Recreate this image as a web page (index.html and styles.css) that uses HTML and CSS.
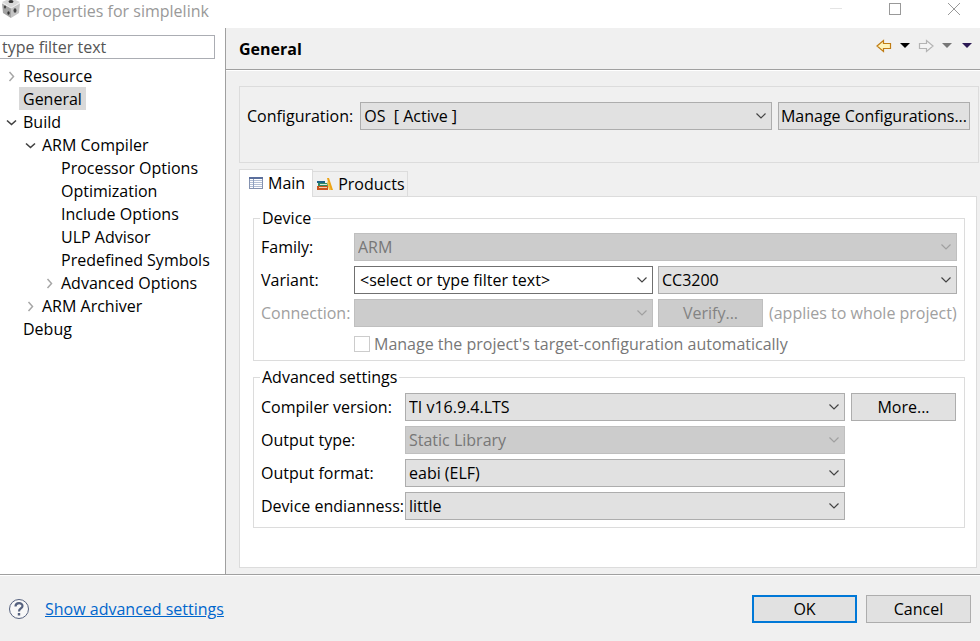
FILE: index.html
```html
<!DOCTYPE html>
<html lang="en">
<head>
  <meta charset="UTF-8" />
  <title>Properties for simplelink</title>
  <link rel="stylesheet" href="styles.css">
</head>
<body>
  <header class="titlebar">
    <svg class="app-icon" width="20" height="20" viewBox="0 0 20 20">
      <path d="M10 -2 L19 2 L10 8 L1 2 Z" fill="#d8d8d8"/>
      <path d="M1 3 L10 8 L10 18 L2 13 Z" fill="#a4a4a4"/>
      <path d="M19 3 L10 8 L10 18 L18 13 Z" fill="#c4c4c4"/>
      <path d="M1 3 L10 8 L19 3" fill="none" stroke="#ececec"/>
      <ellipse cx="10" cy="1.500" rx="2.500" ry="1.500" fill="#333"/>
      <ellipse cx="4" cy="7" rx="1.200" ry="1.500" fill="#444"/>
      <ellipse cx="7.500" cy="13" rx="1.200" ry="1.700" fill="#333"/>
      <ellipse cx="14" cy="10.500" rx="1.500" ry="2.200" fill="#444"/>
    </svg>
    <span class="title">Properties for simplelink</span>
    <div class="window-buttons">
      <button aria-label="Minimize"><svg width="14" height="14"><path d="M1 6.500h12" stroke="#e4e4e4"/></svg></button>
      <button aria-label="Maximize"><svg width="14" height="14"><rect x="1.500" y="1.500" width="11" height="11" fill="none" stroke="#999"/></svg></button>
      <button aria-label="Close"><svg width="14" height="14"><path d="M1 1l12 12M13 1L1 13" stroke="#999"/></svg></button>
    </div>
  </header>

  <main class="dialog">
    <nav class="sidebar">
      <input type="text" class="filter" placeholder="type filter text" aria-label="type filter text" />
      <ul class="tree">
        <li><div class="node closed"><span>Resource</span></div></li>
        <li><div class="node"><span class="selected">General</span></div></li>
        <li>
          <div class="node open"><span>Build</span></div>
          <ul>
            <li>
              <div class="node open"><span>ARM Compiler</span></div>
              <ul>
                <li><div class="node"><span>Processor Options</span></div></li>
                <li><div class="node"><span>Optimization</span></div></li>
                <li><div class="node"><span>Include Options</span></div></li>
                <li><div class="node"><span>ULP Advisor</span></div></li>
                <li><div class="node"><span>Predefined Symbols</span></div></li>
                <li><div class="node closed"><span>Advanced Options</span></div></li>
              </ul>
            </li>
            <li><div class="node closed"><span>ARM Archiver</span></div></li>
          </ul>
        </li>
        <li><div class="node"><span>Debug</span></div></li>
      </ul>
    </nav>

    <section class="page">
      <div class="page-header">
        <h1>General</h1>
        <div class="history">
          <button aria-label="Back"><svg width="16" height="14"><path d="M1 7L7.500 1.500V4.500H14.500V9.500H7.500V12.500Z" fill="#fff3b8" stroke="#c07c14" stroke-width="1.200"/></svg></button>
          <button aria-label="Back history"><svg width="10" height="6"><path d="M0 0h10L5 5z" fill="#000"/></svg></button>
          <button aria-label="Forward"><svg width="16" height="14"><path d="M15 7L8.500 1.500V4.500H1.500V9.500H8.500V12.500Z" fill="#f4f4f4" stroke="#b4b4b4" stroke-width="1.200"/></svg></button>
          <button aria-label="Forward history"><svg width="10" height="6"><path d="M0 0h10L5 5z" fill="#777"/></svg></button>
          <button aria-label="Menu"><svg width="10" height="6"><path d="M0 0h10L5 5z" fill="#2c1a55"/></svg></button>
        </div>
      </div>

      <div class="content">
        <div class="config">
          <label for="configuration">Configuration:</label>
          <select id="configuration"><option>OS&nbsp; [ Active ]</option></select>
          <button class="btn">Manage Configurations...</button>
        </div>

        <div class="tabs" role="tablist">
          <button class="tab active" role="tab" aria-selected="true">
            <svg width="14" height="12">
              <rect x="0.500" y="0.500" width="13" height="11" fill="#fff" stroke="#8492b0"/>
              <path d="M0 0h14v2H0z" fill="#5b6f9c"/>
              <path d="M1 3.500h12M1 5.500h12M1 7.500h12M1 9.500h12" stroke="#b3bfd4"/>
              <path d="M4.500 2v9" stroke="#8fa0bf"/>
            </svg>
            Main
          </button>
          <button class="tab" role="tab">
            <svg width="16" height="14">
              <path d="M0 4h8v2H0z" fill="#1d6385"/>
              <path d="M1 6h10v3H1z" fill="#2f8a62"/>
              <path d="M3 7h7v1H3z" fill="#d8eadf"/>
              <path d="M0 9h11v4H0z" fill="#c9531c"/>
              <path d="M2 10h8v1H2z" fill="#f6cfa8"/>
              <path d="M10 1h2l4 12h-3z" fill="#eda315"/>
              <path d="M11 4l-1 2 2 7h2z" fill="#f7c244"/>
            </svg>
            Products
          </button>
        </div>

        <div class="panel">
          <fieldset>
            <legend>Device</legend>
            <div class="device">
              <label for="family">Family:</label>
              <select id="family" class="wide" disabled><option>ARM</option></select>

              <label for="variant">Variant:</label>
              <div class="combo">
                <input type="text" id="variant" value="&lt;select or type filter text&gt;" />
                <button aria-label="Show variants"></button>
              </div>
              <select aria-label="Device"><option>CC3200</option></select>

              <label for="connection" class="faded">Connection:</label>
              <select id="connection" disabled><option></option></select>
              <div class="verify">
                <button class="btn" disabled>Verify...</button>
                <span class="faded">(applies to whole project)</span>
              </div>

              <label class="check"><input type="checkbox" disabled />Manage the project's target-configuration automatically</label>
            </div>
          </fieldset>

          <fieldset>
            <legend>Advanced settings</legend>
            <div class="advanced">
              <label for="compiler">Compiler version:</label>
              <select id="compiler"><option>TI v16.9.4.LTS</option></select>
              <button class="btn">More...</button>

              <label for="output-type">Output type:</label>
              <select id="output-type" disabled><option>Static Library</option></select>

              <label for="output-format">Output format:</label>
              <select id="output-format"><option>eabi (ELF)</option></select>

              <label for="endianness">Device endianness:</label>
              <select id="endianness"><option>little</option></select>
            </div>
          </fieldset>
        </div>
      </div>
    </section>
  </main>

  <footer class="footer">
    <button class="help" aria-label="Help">
      <svg width="22" height="22" viewBox="0 0 22 22" fill="none" stroke="#56627f">
        <circle cx="11" cy="11" r="9.500" fill="#f8f8f8"/>
        <path d="M7.500 8.500C7.500 4 14.500 4 14.500 8C14.500 10.500 11 10.500 11 13.500" stroke-width="2.200"/>
        <path d="M11 15v2.500" stroke-width="2.400"/>
      </svg>
    </button>
    <a href="#">Show advanced settings</a>
    <button class="btn ok">OK</button>
    <button class="btn">Cancel</button>
  </footer>
</body>
</html>
```
FILE: styles.css
```css
* {
  box-sizing: border-box;
}

body {
  margin: 0;
  min-height: 100vh;
  display: flex;
  flex-direction: column;
  background: #f0f0f0;
  color: #000;
  font-family: "Open Sans", "Noto Sans", sans-serif;
  font-size: 16px;
  line-height: 20px;
}

button, input, select {
  font: inherit;
  color: inherit;
}

button {
  padding: 0;
  border: none;
  background: none;
}

svg {
  display: block;
}

/* title bar */
.titlebar {
  display: flex;
  align-items: flex-start;
  height: 28px;
  background: #fff;
  color: #999;
}

.title {
  line-height: 22px;
}

.app-icon {
  margin: 0 5px 0 1px;
}

.window-buttons {
  display: flex;
  gap: 45px;
  margin: 2px 19px 0 auto;
}

.dialog {
  flex: 1;
  display: flex;
  border-bottom: 1px solid #a0a0a0;
}

/* left tree */
.sidebar {
  width: 226px;
  padding-top: 7px;
  background: #fff;
  border-right: 1px solid #a0a0a0;
}

.filter {
  display: block;
  width: 215px;
  height: 24px;
  padding: 0 2px;
  border: 1px solid #abadb3;
  border-left: none;
}

.filter::placeholder {
  color: #555;
}

.tree, .tree ul {
  margin: 0;
  padding: 0;
  list-style: none;
}

.tree {
  padding: 5px 0 0 4px;
}

.tree ul {
  padding-left: 19px;
}

.node {
  display: flex;
  height: 23px;
  padding-left: 15px;
  line-height: 24px;
  background: 2px 7px no-repeat;
}

.node span {
  padding: 0 4px;
}

.node .selected {
  background: #d9d9d9;
}

.closed {
  background-image: url("data:image/svg+xml,%3Csvg xmlns='http://www.w3.org/2000/svg' width='11' height='11'%3E%3Cpath d='M3.500 1l4 4.500-4 4.500' fill='none' stroke='%23a6a6a6' stroke-width='1.500'/%3E%3C/svg%3E");
}

.open {
  background-image: url("data:image/svg+xml,%3Csvg xmlns='http://www.w3.org/2000/svg' width='11' height='11'%3E%3Cpath d='M1 3.500l4.500 4 4.500-4' fill='none' stroke='%23404040' stroke-width='1.600'/%3E%3C/svg%3E");
}

/* right page */
.page {
  flex: 1;
  display: flex;
  flex-direction: column;
}

.page-header {
  display: flex;
  align-items: center;
  justify-content: space-between;
  height: 42px;
  padding: 0 8px 0 13px;
  border-bottom: 1px solid #a0a0a0;
}

h1 {
  margin: 0;
  font-size: 16px;
}

.history {
  display: flex;
  align-items: center;
  gap: 8px;
  padding-bottom: 5px;
}

.history button:last-child {
  margin-left: 2px;
}

.content {
  flex: 1;
  display: flex;
  flex-direction: column;
  padding: 15px 3px 6px 13px;
  border-top: 1px solid #fff;
}

.config {
  display: flex;
  align-items: flex-start;
  gap: 6px;
  height: 77px;
  margin-right: -2px;
  padding: 15px 8px 0 7px;
  border: 1px solid #dcdcdc;
}

.config label {
  padding: 4px 1px 0 0;
}

.config select {
  flex: 1;
}

.config .btn {
  padding: 0 2px;
}

select, .combo {
  width: 100%;
  min-width: 0;
  height: 28px;
  border: 1px solid #adadad;
  border-radius: 0;
}

select {
  appearance: none;
  padding: 0 24px 0 3px;
  background: #e1e1e1 right 4px center no-repeat;
}

select, .combo button {
  background-image: url("data:image/svg+xml,%3Csvg xmlns='http://www.w3.org/2000/svg' width='12' height='8'%3E%3Cpath d='M1.500 1.500L6 6l4.500-4.500' fill='none' stroke='%23444' stroke-width='1.200'/%3E%3C/svg%3E");
}

select:disabled {
  background-color: #ccc;
  background-image: url("data:image/svg+xml,%3Csvg xmlns='http://www.w3.org/2000/svg' width='12' height='8'%3E%3Cpath d='M1.500 1.500L6 6l4.500-4.500' fill='none' stroke='%23a0a0a0' stroke-width='1.200'/%3E%3C/svg%3E");
  border-color: #bfbfbf;
  color: #777;
  opacity: 1;
}

.btn {
  min-width: 105px;
  height: 28px;
  padding: 0 4px;
  background: #e1e1e1;
  border: 1px solid #adadad;
}

.btn:disabled {
  background: #ccc;
  border-color: #bfbfbf;
  color: #838383;
}

/* tabs */
.tabs {
  display: flex;
  align-items: flex-end;
  margin-top: 6px;
}

.tab {
  display: flex;
  align-items: center;
  gap: 5px;
  height: 25px;
  padding: 0 2px 0 4px;
  border: 1px solid #dcdcdc;
  border-width: 1px 1px 0 0;
}

.tab.active {
  height: 28px;
  margin-bottom: -1px;
  padding: 0 7px 2px 9px;
  background: #fff;
  border-left-width: 1px;
  z-index: 1;
}

.panel {
  flex: 1;
  padding: 11px 11px 0 13px;
  background: #fff;
  border: 1px solid #dcdcdc;
}

fieldset {
  margin: 0 0 6px;
  padding: 5px 7px 4px;
  border: 1px solid #dcdcdc;
}

legend {
  padding: 0 2px;
  margin-left: -1px;
}

.device {
  display: grid;
  grid-template-columns: 88px 1fr 1fr;
  align-items: center;
  gap: 5px;
}

.wide {
  grid-column: 2 / 4;
}

.faded {
  color: #a0a0a0;
}

.combo {
  display: flex;
  background: #fff;
  border-color: #707070;
}

.combo input {
  flex: 1;
  min-width: 0;
  padding: 0 5px;
  border: none;
}

.combo button {
  width: 20px;
  background-position: center;
  background-repeat: no-repeat;
}

.verify {
  display: flex;
  align-items: center;
  gap: 6px;
  min-width: 0;
  white-space: nowrap;
}

.check {
  grid-column: 2 / 4;
  display: flex;
  align-items: center;
  gap: 4px;
  height: 24px;
  color: #777;
}

.check input {
  appearance: none;
  width: 16px;
  height: 16px;
  margin: 0;
  background: #fff;
  border: 1px solid #ccc;
}

.advanced {
  display: grid;
  grid-template-columns: 138px 1fr 105px;
  align-items: center;
  gap: 5px 6px;
  padding: 1px 1px 3px 0;
}

.advanced label {
  grid-column: 1;
  white-space: nowrap;
}

/* bottom bar */
.footer {
  display: flex;
  align-items: center;
  gap: 9px;
  height: 66px;
  padding: 0 9px 0 8px;
  border-top: 1px solid #fff;
}

.footer a {
  margin: 0 auto 0 6px;
  color: #0066cc;
}

.ok {
  border: 2px solid #0078d7;
}
```
